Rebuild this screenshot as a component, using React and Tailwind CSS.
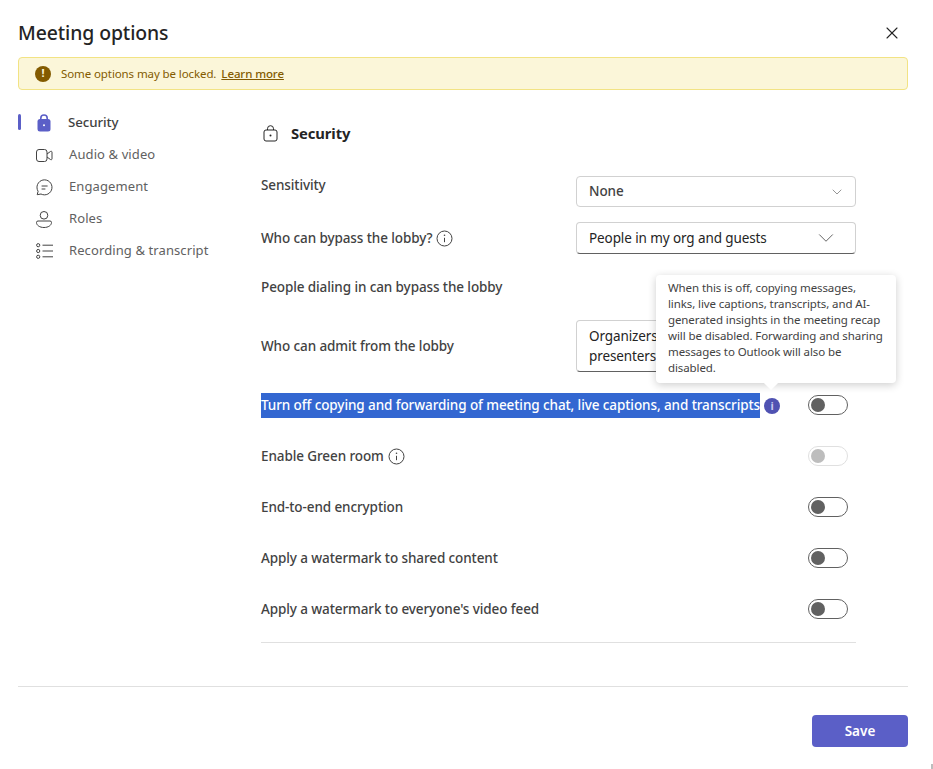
import { X, ChevronDown } from 'lucide-react';

const font = 'font-["Noto_Sans",sans-serif]';

function InfoIcon() {
  return (
    <svg width="17" height="17" viewBox="0 0 17 17" fill="none" className="shrink-0">
      <circle cx="8.5" cy="8.5" r="7.5" stroke="#424242" strokeWidth="1" />
      <circle cx="8.5" cy="5.3" r="0.8" fill="#424242" />
      <path d="M8.5 7.8v4.4" stroke="#424242" strokeWidth="1" />
    </svg>
  );
}

function LockIcon({ filled }) {
  if (filled) {
    return (
      <svg width="16" height="18" viewBox="0 0 16 18">
        <path d="M4.8 5.5V4.2a3.2 3.2 0 0 1 6.4 0v1.3" fill="none" stroke="#5b5fc7" strokeWidth="1.6" />
        <rect x="1.5" y="5" width="13" height="12.5" rx="2.5" fill="#5b5fc7" />
        <circle cx="8" cy="11.2" r="1" fill="#fff" />
      </svg>
    );
  }
  return (
    <svg width="15" height="17" viewBox="0 0 15 17" fill="none">
      <path d="M4.5 5V3.7a3 3 0 0 1 6 0V5" stroke="#242424" strokeWidth="1" />
      <rect x="1" y="5" width="13" height="11" rx="2" stroke="#242424" strokeWidth="1" />
      <circle cx="7.5" cy="10.5" r="1" fill="#242424" />
    </svg>
  );
}

function NavIcon({ name }) {
  if (name === 'video') {
    return (
      <svg width="17" height="13" viewBox="0 0 17 13" fill="none" stroke="#424242" strokeWidth="1">
        <rect x="0.5" y="0.5" width="10.5" height="12" rx="2.5" />
        <path d="M11 5l3.6-2.6c.6-.4 1.4 0 1.4.7v6.800c0 .7-.8 1.100-1.400.7L11 8" />
      </svg>
    );
  }
  if (name === 'chat') {
    return (
      <svg width="17" height="17" viewBox="0 0 17 17" fill="none" stroke="#424242" strokeWidth="1">
        <path d="M1.2 15.7l.9-3.4A7.5 7.5 0 1 1 5 15l-3.8.7z" />
        <path d="M5.6 7h6M5.6 10h3.8" />
      </svg>
    );
  }
  if (name === 'person') {
    return (
      <svg width="16" height="17" viewBox="0 0 16 17" fill="none" stroke="#424242" strokeWidth="1">
        <circle cx="8" cy="4.3" r="3.8" />
        <path d="M2 10h12a1.500 1.500 0 0 1 1.500 1.500c0 2.800-3.200 5-7.500 5s-7.500-2.200-7.500-5A1.500 1.500 0 0 1 2 10z" />
      </svg>
    );
  }
  return (
    <svg width="17" height="16" viewBox="0 0 17 16" fill="none" stroke="#424242" strokeWidth="1">
      <circle cx="2.2" cy="2.2" r="1.6" />
      <circle cx="2.2" cy="8" r="1.6" />
      <circle cx="2.2" cy="13.8" r="1.6" />
      <path d="M6.5 2.2H17M6.5 8H17M6.5 13.8H17" />
    </svg>
  );
}

function Toggle({ disabled }) {
  return (
    <span
      className={
        'flex h-[20px] w-[40px] shrink-0 items-center rounded-full border pl-[2px] ' +
        (disabled ? 'border-[#e0e0e0]' : 'border-[#616161]')
      }
    >
      <span className={'h-[14px] w-[14px] rounded-full ' + (disabled ? 'bg-[#bdbdbd]' : 'bg-[#616161]')} />
    </span>
  );
}

const navItems = [
  { label: 'Audio & video', icon: 'video' },
  { label: 'Engagement', icon: 'chat' },
  { label: 'Roles', icon: 'person' },
  { label: 'Recording & transcript', icon: 'list' },
];

function ToggleRow({ label, info, disabled }) {
  return (
    <div className="flex h-[50px] items-center justify-between pr-[8px]">
      <div className="flex items-center gap-[4px]">
        <span className="text-[13.5px] font-medium tracking-[-0.1px] text-[#424242]">{label}</span>
        {info && <InfoIcon />}
      </div>
      <Toggle disabled={disabled} />
    </div>
  );
}

export default function App() {
  return (
    <div className={'relative flex h-[769px] w-[933px] flex-col overflow-hidden bg-white pl-[18px] pr-[25px] text-[#242424] ' + font}>
      {/* Title */}
      <div className="flex h-[57px] items-center justify-between pr-[6px] pt-[8px]">
        <h1 className="text-[19.4px] font-medium tracking-[-0.1px] text-[#242424]">Meeting options</h1>
        <X size={20} strokeWidth={1.3} color="#242424" />
      </div>

      {/* Locked banner */}
      <div className="flex h-[33px] items-center rounded-[4px] border border-[#f2e384] bg-[#fbf6d9] pl-[16px]">
        <span className="mr-[10px] flex h-[16px] w-[16px] items-center justify-center rounded-full bg-[#835b00] text-[11px] font-bold text-[#fbf6d9]">
          !
        </span>
        <span className="text-[11.5px] tracking-[-0.1px] text-[#835b00]">Some options may be locked.</span>
        <span className="ml-[5px] text-[11.5px] font-medium tracking-[-0.1px] text-[#835b00] underline">Learn more</span>
      </div>

      <div className="flex flex-1">
        {/* Side nav */}
        <nav className="w-[243px] shrink-0 pt-[17px]">
          <div className="relative flex h-[32px] items-center">
            <span className="absolute left-0 top-[7px] h-[16px] w-[3px] rounded-full bg-[#5b5fc7]" />
            <span className="ml-[18px] flex w-[32px] justify-start"><LockIcon filled /></span>
            <span className="text-[13.3px] font-medium tracking-[-0.1px] text-[#424242]">Security</span>
          </div>
          {navItems.map(({ label, icon }) => (
            <div key={label} className="flex h-[32px] items-center">
              <span className="ml-[18px] flex w-[33px] justify-start"><NavIcon name={icon} /></span>
              <span className="text-[13px] tracking-[0.1px] text-[#616161]">{label}</span>
            </div>
          ))}
        </nav>

        {/* Security section */}
        <main className="w-[595px] pt-[32px]">
          <div className="flex h-[22px] items-center gap-[13px] pl-[2px]">
            <LockIcon />
            <h2 className="text-[14.8px] font-bold tracking-[-0.1px] text-[#242424]">Security</h2>
          </div>

          <div className="mt-[32px] flex h-[34px] items-start">
            <span className="w-[315px] text-[13.5px] leading-[18px] font-medium tracking-[-0.1px] text-[#424242]">Sensitivity</span>
            <div className="flex h-[31px] w-[280px] items-center justify-between rounded-[4px] border border-[#d1d1d1] pl-[12px] pr-[10px]">
              <span className="text-[13.5px] font-medium tracking-[-0.1px] text-[#424242]">None</span>
              <ChevronDown size={16} strokeWidth={1} color="#616161" />
            </div>
          </div>

          <div className="mt-[12px] flex h-[32px] items-center">
            <div className="flex w-[315px] items-center gap-[4px]">
              <span className="text-[13.5px] font-medium tracking-[-0.1px] text-[#424242]">Who can bypass the lobby?</span>
              <InfoIcon />
            </div>
            <div className="flex h-[32px] w-[280px] items-center justify-between rounded-[4px] border border-[#d1d1d1] border-b-[#616161] pl-[12px] pr-[16px]">
              <span className="text-[13.5px] tracking-[-0.1px] text-[#242424]">People in my org and guests</span>
              <ChevronDown size={26} strokeWidth={0.9} color="#616161" />
            </div>
          </div>

          <div className="flex h-[66px] items-center">
            <span className="text-[13.5px] font-medium tracking-[-0.1px] text-[#424242]">People dialing in can bypass the lobby</span>
          </div>

          <div className="flex h-[52px] items-center">
            <span className="w-[315px] text-[13.5px] font-medium tracking-[-0.1px] text-[#424242]">Who can admit from the lobby</span>
            <div className="flex h-[52px] w-[280px] items-center rounded-[4px] border border-[#d1d1d1] border-b-[#616161] pl-[12px]">
              <span className="text-[13.5px] leading-[20px] tracking-[-0.1px] text-[#242424]">
                Organizers
                <br />
                presenters
              </span>
            </div>
          </div>

          {/* Highlighted row with tooltip */}
          <div className="relative mt-[21px] flex h-[25px] items-center justify-between pr-[8px]">
            <div className="flex items-center gap-[4px]">
              <span className="flex h-[25px] items-center whitespace-nowrap bg-[#3367d1] text-[13.5px] font-medium tracking-[-0.09px] text-white">
                Turn off copying and forwarding of meeting chat, live captions, and transcripts
              </span>
              <span className="flex h-[16px] w-[16px] items-center justify-center rounded-full bg-[#4f52b2] text-[11px] font-bold leading-none text-[#c8c9ef]">
                i
              </span>
            </div>
            <span className="mb-[1px]"><Toggle /></span>
            <div className="absolute bottom-[35px] left-[395px] w-[240px] rounded-[4px] bg-white px-[12px] pb-[7px] pt-[5px] text-[11.5px] leading-[16px] tracking-[-0.1px] text-[#424242] shadow-[0_2px_8px_rgba(0,0,0,0.2)]">
              When this is off, copying messages, links, live captions, transcripts, and AI-generated insights in the meeting recap will be disabled. Forwarding and sharing messages to Outlook will also be disabled.
              <span className="absolute bottom-[-5px] left-[110px] h-[10px] w-[10px] rotate-45 bg-white" />
            </div>
          </div>

          <div className="mt-[13px] flex flex-col gap-px">
            <ToggleRow label="Enable Green room" info disabled />
            <ToggleRow label="End-to-end encryption" />
            <ToggleRow label="Apply a watermark to shared content" />
            <ToggleRow label="Apply a watermark to everyone's video feed" />
          </div>

          <div className="mt-[8px] h-px bg-[#e0e0e0]" />
        </main>
      </div>

      {/* Footer */}
      <div className="h-px bg-[#e0e0e0]" />
      <div className="flex h-[82px] justify-end pt-[28px]">
        <button className="h-[32px] w-[96px] rounded-[4px] bg-[#5b5fc7] text-[13.5px] font-semibold text-white">Save</button>
      </div>

      {/* sliver of the window corner */}
      <span className="absolute bottom-0 right-0 h-[5px] w-[2px] bg-[#bdbdbd]" />
    </div>
  );
}
